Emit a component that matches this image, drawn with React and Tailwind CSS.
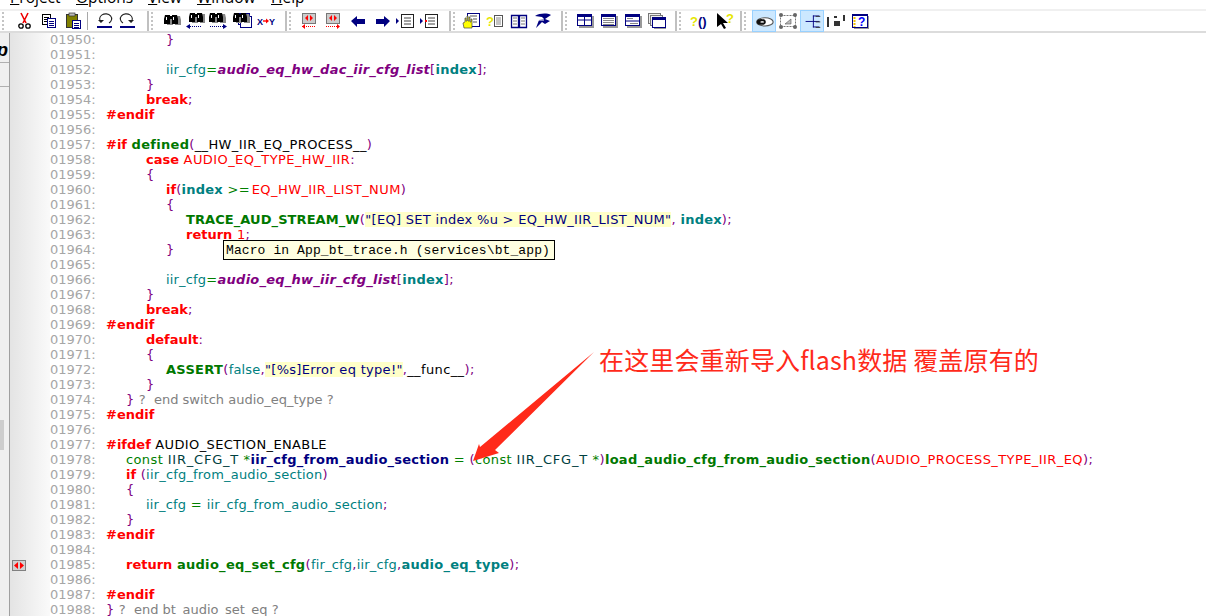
const NAVY = '#000080';

const Svg = ({ children, w = 22, h = 20 }) => (
  <svg width={w} height={h} viewBox={`0 0 ${w} ${h}`} className="block">{children}</svg>
);

const Binoc = ({ x = 5, y = 3 }) => (
  <g>
    <path d={`M${x + 2} ${y + 2}h5v9h-6v-5zM${x + 9} ${y + 2}h5l1 4v5h-6z`} fill="#888" transform="translate(2 1)" />
    <path d={`M${x + 1} ${y + 2}h5v9h-6v-5zM${x + 8} ${y + 2}h5l1 4v5h-6z`} fill="#000" />
    <rect x={x + 6} y={y + 3} width="2" height="3" fill="#000" />
    <rect x={x + 2} y={y + 4} width="1" height="3" fill="#fff" />
    <rect x={x + 9} y={y + 4} width="1" height="3" fill="#fff" />
  </g>
);

const Doc = ({ x, y, w = 8, h = 10, fill = '#fff', line = '#000' }) => (
  <g>
    <rect x={x + 0.5} y={y + 0.5} width={w} height={h} fill={fill} stroke={line} />
    <path d={`M${x + 2} ${y + 3.5}h${w - 3}M${x + 2} ${y + 5.5}h${w - 3}M${x + 2} ${y + 7.5}h${w - 3}`} stroke={line} />
  </g>
);

const Win = ({ x = 3, y = 3, w = 15, h = 12, children }) => (
  <g>
    <rect x={x + 2} y={y + 2} width={w} height={h} fill="#999" />
    <rect x={x + 0.5} y={y + 0.5} width={w - 1} height={h - 1} fill="#fff" stroke={NAVY} />
    <rect x={x} y={y} width={w} height="3" fill={NAVY} />
    {children}
  </g>
);

const Bookmark = ({ dir }) => (
  <Svg>
    <rect x="4.5" y="2.5" width="13" height="10" fill="#ccc" stroke="#777" />
    <path d="M10 4v6l-3-3zM12 4v6l3-3z" fill="#f00" />
    <path d="M4 15.5h13" stroke="#f00" strokeDasharray="1 1" />
    {dir === 'l' ? <path d="M7 13v5l-3-2.5z" fill="#f00" /> : <path d="M15 13v5l3-2.5z" fill="#f00" />}
  </Svg>
);

const icons = {
  cut: (
    <Svg>
      <path d="M7 2l5 10M14 2l-5 10" stroke="#e00" strokeWidth="1.6" fill="none" />
      <circle cx="7" cy="15" r="2.2" fill="none" stroke="#000" strokeWidth="1.3" />
      <circle cx="14" cy="15" r="2.2" fill="none" stroke="#000" strokeWidth="1.3" />
    </Svg>
  ),
  copy: (
    <Svg>
      <Doc x={4} y={3} w={8} h={10} />
      <Doc x={9} y={7} w={8} h={9} fill="#fff" line={NAVY} />
    </Svg>
  ),
  paste: (
    <Svg>
      <rect x="4.5" y="3.5" width="11" height="13" fill="#808000" stroke="#333" />
      <rect x="7" y="2" width="6" height="3" fill="#bbb" stroke="#333" strokeWidth="0.7" />
      <Doc x={10} y={9} w={8} h={8} line={NAVY} />
    </Svg>
  ),
  undo: (
    <Svg>
      <path d="M8 11a6 5 0 1 1 8 1" fill="none" stroke="#222" strokeWidth="1.1" />
      <path d="M5 9h6l-3 3z" fill="#222" />
      <rect x="4" y="15" width="15" height="2" fill={NAVY} />
    </Svg>
  ),
  redo: (
    <Svg>
      <path d="M14 11a6 5 0 1 0-8 1" fill="none" stroke="#222" strokeWidth="1.1" />
      <path d="M17 9h-6l3 3z" fill="#222" />
      <rect x="3" y="15" width="15" height="2" fill={NAVY} />
    </Svg>
  ),
  find: <Svg><Binoc y={2} /></Svg>,
  findBack: (
    <Svg>
      <Binoc x={6} y={0} />
      <path d="M5 15.5h14" stroke={NAVY} strokeDasharray="1 1" />
      <path d="M7 13v5l-4-2.5z" fill={NAVY} />
    </Svg>
  ),
  findNext: (
    <Svg>
      <Binoc x={2} y={0} />
      <path d="M3 15.5h14" stroke={NAVY} strokeDasharray="1 1" />
      <path d="M16 13v5l4-2.5z" fill={NAVY} />
    </Svg>
  ),
  findFiles: (
    <Svg>
      <rect x="7.5" y="2.5" width="11" height="11" fill="#fff" stroke={NAVY} />
      <rect x="9.5" y="5.5" width="11" height="11" fill="#fff" stroke={NAVY} />
      <Binoc x={2} y={0} />
    </Svg>
  ),
  replace: (
    <Svg>
      <text x="2" y="14" fontFamily="Liberation Sans" fontSize="9" fontWeight="700" fill={NAVY}>X</text>
      <path d="M8 10h5" stroke="#f00" strokeWidth="1.4" />
      <path d="M11 7.5l3 2.5-3 2.5z" fill="#f00" />
      <text x="14" y="14" fontFamily="Liberation Sans" fontSize="9" fontWeight="700" fill={NAVY}>Y</text>
    </Svg>
  ),
  bmBack: <Bookmark dir="l" />,
  bmNext: <Bookmark dir="r" />,
  arrowL: <Svg><path d="M5 10l6-5v3h8v5h-8v3z" fill={NAVY} /></Svg>,
  arrowR: <Svg><path d="M20 10l-6-5v3H6v5h8v3z" fill={NAVY} /></Svg>,
  listBack: (
    <Svg>
      <path d="M2 7l3 3-3 3z" fill={NAVY} />
      <rect x="7.5" y="3.5" width="12" height="13" fill="#fff" stroke="#222" />
      <path d="M10 7h7M10 10h7M10 13h7" stroke="#444" />
    </Svg>
  ),
  listNext: (
    <Svg>
      <path d="M2 7l3 3-3 3z" fill={NAVY} />
      <rect x="7.5" y="3.5" width="12" height="13" fill="#fff" stroke="#222" />
      <path d="M10 7h7M10 10h7M10 13h7" stroke="#444" />
      <rect x="7" y="9" width="2" height="2" fill="#f00" />
    </Svg>
  ),
  hand: (
    <Svg>
      <rect x="7.5" y="2.5" width="12" height="13" fill="#fff" stroke={NAVY} />
      <path d="M10 5h7M13 8h4M13 11h4" stroke="#555" />
      <path d="M3 12l2-1V7h1v3h1V5h1v5h1V6h1v5h1V8h1v9H4z" fill="#ff0" stroke="#444" strokeWidth="0.7" />
    </Svg>
  ),
  helpDoc: (
    <Svg>
      <text x="2" y="15" fontFamily="Liberation Sans" fontSize="13" fontWeight="700" fill="#e6e600">?</text>
      <rect x="10.5" y="4.5" width="8" height="11" fill="#fff" stroke="#555" />
      <path d="M12 7h5M12 9h5M12 11h5M12 13h5" stroke="#888" />
    </Svg>
  ),
  book: (
    <Svg>
      <path d="M3.5 4.5h7v12h-7zM11.5 4.5h7v12h-7z" fill="#fff" stroke={NAVY} strokeWidth="1.3" />
      <path d="M5 7h4M5 10h4M5 13h4M13 7h4M13 10h4M13 13h4" stroke="#777" />
    </Svg>
  ),
  swirl: (
    <Svg>
      <path d="M3 5c5-3 12-3 16-1l-6 4 5 2-5 3-3-2-6 6 3-8 5-1-2-2z" fill={NAVY} />
      <path d="M5 9h7" stroke="#fff" />
    </Svg>
  ),
  grid: (
    <Svg>
      <Win><path d="M3 9h15M10.5 6v9" stroke={NAVY} /></Win>
    </Svg>
  ),
  lines: (
    <Svg>
      <Win><path d="M5 7.5h11M5 9.5h11M5 11.5h11M5 13.5h11" stroke="#888" /></Win>
    </Svg>
  ),
  split: (
    <Svg>
      <Win><path d="M3 10h15" stroke={NAVY} /><path d="M5 7.5h6M8 12.5h8" stroke="#888" /></Win>
    </Svg>
  ),
  cascade: (
    <Svg>
      <rect x="2.5" y="2.5" width="12" height="10" fill="#eee" stroke="#777" />
      <rect x="4.5" y="4.5" width="12" height="10" fill="#eee" stroke="#777" />
      <rect x="8" y="8" width="12" height="10" fill="#999" />
      <rect x="6.5" y="6.5" width="13" height="10" fill="#fff" stroke={NAVY} />
      <rect x="6" y="6" width="14" height="3" fill={NAVY} />
    </Svg>
  ),
  paren: (
    <Svg>
      <text x="1" y="15" fontFamily="Liberation Sans" fontSize="13" fontWeight="700" fill="#e6e600">?</text>
      <text x="9" y="15" fontFamily="Liberation Sans" fontSize="13" fontWeight="700" fill={NAVY}>()</text>
    </Svg>
  ),
  pointer: (
    <Svg>
      <path d="M4 2v14l4-3 3 5 2-1-3-5h5z" fill="#000" />
      <text x="13" y="12" fontFamily="Liberation Sans" fontSize="13" fontWeight="700" fill="#e6e600">?</text>
    </Svg>
  ),
  lens: (
    <Svg w={24}>
      <ellipse cx="13" cy="11" rx="9" ry="4.5" fill="#fff" stroke="#555" strokeWidth="1.2" />
      <ellipse cx="9" cy="11" rx="5" ry="3.2" fill="#111" />
      <ellipse cx="10" cy="11" rx="2" ry="1" fill="#ddd" />
    </Svg>
  ),
  frame: (
    <Svg>
      <rect x="3.5" y="4.5" width="15" height="11" fill="none" stroke="#777" strokeDasharray="2 1" />
      <path d="M8 13l6-5v5z" fill="#bbb" stroke="#555" strokeWidth="0.6" />
      <circle cx="4" cy="4" r="2" fill="#666" />
      <circle cx="18" cy="4" r="2" fill="#666" />
      <circle cx="4" cy="16" r="2" fill="#666" />
      <circle cx="18" cy="16" r="2" fill="#666" />
    </Svg>
  ),
  tree: (
    <Svg w={24}>
      <path d="M5 10.5h8M13 4.5h7M13 10.5h7M13 16.5h7M13.5 4v13" stroke={NAVY} fill="none" />
      <path d="M16 5h5M16 11h5M16 17h5" stroke="#333" fill="none" />
    </Svg>
  ),
  layout: (
    <Svg>
      <rect x="2" y="6" width="2" height="10" fill="#333" />
      <rect x="9" y="10" width="6" height="5" fill="#333" />
      <rect x="9" y="5" width="3" height="2" fill="#333" />
      <rect x="18" y="4" width="2" height="6" fill="#333" />
    </Svg>
  ),
  help: (
    <Svg>
      <rect x="5" y="5" width="15" height="13" fill="#999" />
      <rect x="3.5" y="3.5" width="15" height="13" fill="#fff" stroke={NAVY} />
      <rect x="3" y="3" width="16" height="2" fill={NAVY} />
      <path d="M5.5 6v10" stroke="#f0c000" strokeWidth="2" strokeDasharray="2 1" />
      <text x="9" y="15" fontFamily="Liberation Sans" fontSize="12" fontWeight="700" fill="#00f">?</text>
    </Svg>
  ),
};

const Grip = () => (
  <div className="flex h-full w-[3px] flex-col justify-center gap-[2px]">
    {[0, 1, 2, 3, 4].map((i) => (
      <span key={i} className="h-[2px] w-[2px] bg-[#c4c4c4]" />
    ))}
  </div>
);

const Tool = ({ name, active }) => (
  <div
    className={`flex h-[22px] w-6 items-center justify-center ${active ? 'border border-[#99d1ff] bg-[#cce8ff]' : ''}`}
  >
    {icons[name]}
  </div>
);

const groups = [
  { w: 'w-[149px]', pad: 'pl-[8px]', items: ['cut', 'copy', 'paste', '|', 'undo', 'redo'] },
  { w: 'w-[138px]', pad: 'pl-[4px]', items: ['find', 'findBack', 'findNext', 'findFiles', 'replace'] },
  { w: 'w-[164px]', pad: 'pl-[5px]', items: ['bmBack', 'bmNext', 'arrowL', 'arrowR', 'listBack', 'listNext'] },
  { w: 'w-[112px]', pad: 'pl-[3px]', items: ['hand', 'helpDoc', 'book', 'swirl'] },
  { w: 'w-[114px]', pad: 'pl-[5px]', items: ['grid', 'lines', 'split', 'cascade'] },
  { w: 'w-[65px]', pad: 'pl-[6px]', items: ['paren', 'pointer'] },
  { w: 'w-[136px]', pad: 'pl-[5px]', items: ['lens*', 'frame', 'tree*', 'layout', 'help'] },
];

const Toolbar = () => (
  <div className="flex h-[24px] border-t-2 border-b-2 border-t-[#f0f0f0] border-b-[#dcdcdc] bg-white">
    {groups.map((g, i) => (
      <div key={i} className={`flex h-full items-center pl-[2px] ${g.w} ${i < 6 ? 'border-r-2 border-r-[#c0c0c0]' : ''}`}>
        <Grip />
        <div className={`flex items-center ${g.pad}`}>
          {g.items.map((it, j) =>
            it === '|' ? (
              <span key={j} className="ml-[2px] mr-[4px] h-[18px] w-px bg-[#a8a8a8]" />
            ) : (
              <Tool key={j} name={it.replace('*', '')} active={it.endsWith('*')} />
            )
          )}
        </div>
      </div>
    ))}
  </div>
);

const Menu = () => (
  <div className="relative h-[9px] overflow-hidden bg-white font-['Open_Sans',sans-serif] text-[15.5px] leading-none text-black">
    <div className="flex -translate-y-[10px] pl-[10px]">
      <span className="w-[66px]"><u>P</u>roject</span>
      <span className="w-[72px]"><u>O</u>ptions</span>
      <span className="w-[49px]"><u>V</u>iew</span>
      <span className="w-[74px]"><u>W</u>indow</span>
      <span><u>H</u>elp</span>
    </div>
  </div>
);

const styles = {
  kw: 'font-bold tracking-normal text-[#ff0000]',
  red: 'tracking-[0.42px] text-[#ff0000]',
  v: 'tracking-[0.18px] text-[#008080]',
  vb: 'font-bold tracking-[0.24px] text-[#008080]',
  op: 'text-[#008000]',
  br: 'text-[#800080]',
  fn: 'font-bold tracking-[0.3px] text-[#007800]',
  fu: 'font-bold tracking-[0.08px] text-[#007800]',
  gl: 'font-bold italic tracking-[0.24px] text-[#800080]',
  str: 'bg-[#ffffc8] tracking-[0.3px] text-[#000080]',
  tx: 'text-black',
  gr: 'tracking-normal text-[#808080]',
  lv: 'font-bold tracking-[0.24px] text-[#000080]',
  ty: 'tracking-[0.8px] text-[#004040]',
};

// [indent level, tokens...]
const code = [
  [3, ['}', 'br']],
  [],
  [3, ['iir_cfg', 'v'], ['=', 'op'], ['audio_eq_hw_dac_iir_cfg_list', 'gl'], ['[', 'br'], ['index', 'vb'], [']', 'br'], [';', 'br']],
  [2, ['}', 'br']],
  [2, ['break', 'kw'], [';', 'br']],
  [0, ['#endif', 'kw']],
  [],
  [0, ['#if ', 'kw'], ['defined', 'fn'], ['(', 'br'], ['__HW_IIR_EQ_PROCESS__', 'tx'], [')', 'br']],
  [2, ['case ', 'kw'], ['AUDIO_EQ_TYPE_HW_IIR', 'red'], [':', 'br']],
  [2, ['{', 'br']],
  [3, ['if', 'kw'], ['(', 'br'], ['index', 'vb'], [' >=\u200A', 'op'], ['EQ_HW_IIR_LIST_NUM', 'red'], [')', 'br']],
  [3, ['{', 'br']],
  [4, ['TRACE_AUD_STREAM_W', 'fu'], ['(', 'br'], ['"[EQ] SET index %u > EQ_HW_IIR_LIST_NUM"', 'str'], [', ', 'br'], ['index', 'vb'], [');', 'br']],
  [4, ['return ', 'kw'], ['1', 'red'], [';', 'br']],
  [3, ['}', 'br']],
  [],
  [3, ['iir_cfg', 'v'], ['=', 'op'], ['audio_eq_hw_iir_cfg_list', 'gl'], ['[', 'br'], ['index', 'vb'], [']', 'br'], [';', 'br']],
  [2, ['}', 'br']],
  [2, ['break', 'kw'], [';', 'br']],
  [0, ['#endif', 'kw']],
  [2, ['default', 'kw'], [':', 'br']],
  [2, ['{', 'br']],
  [3, ['ASSERT', 'fn'], ['(', 'br'], ['false', 'v'], [',', 'br'], ['"[%s]Error eq type!"', 'str'], [',', 'br'], ['__func__', 'tx'], [')', 'br'], [';', 'br']],
  [2, ['}', 'br']],
  [1, ['}', 'br'], [' ?  end switch audio_eq_type ?', 'gr']],
  [0, ['#endif', 'kw']],
  [],
  [0, ['#ifdef ', 'kw'], ['AUDIO_SECTION_ENABLE', 'tx']],
  [1, ['const ', 'op'], ['IIR_CFG_T', 'ty'], [' *', 'op'], ['iir_cfg_from_audio_section', 'lv'], [' = ', 'op'], ['(', 'br'], ['const ', 'op'], ['IIR_CFG_T', 'ty'], [' *', 'op'], [')', 'br'], ['load_audio_cfg_from_audio_section', 'fn'], ['(', 'br'], ['AUDIO_PROCESS_TYPE_IIR_EQ', 'red'], [')', 'br'], [';', 'br']],
  [1, ['if ', 'kw'], ['(', 'br'], ['iir_cfg_from_audio_section', 'v'], [')', 'br']],
  [1, ['{', 'br']],
  [2, ['iir_cfg', 'v'], [' = ', 'op'], ['iir_cfg_from_audio_section', 'v'], [';', 'br']],
  [1, ['}', 'br']],
  [0, ['#endif', 'kw']],
  [],
  [1, ['return ', 'kw'], ['audio_eq_set_cfg', 'fn'], ['(', 'br'], ['fir_cfg', 'v'], [',', 'br'], ['iir_cfg', 'v'], [',', 'br'], ['audio_eq_type', 'vb'], [')', 'br'], [';', 'br']],
  [],
  [0, ['#endif', 'kw']],
  [0, ['}', 'br'], [' ?  end bt_audio_set_eq ?', 'gr']],
];

const indents = ['pl-0', 'pl-[20px]', 'pl-[40px]', 'pl-[60px]', 'pl-[80px]'];

const CodeLine = ({ num, line }) => {
  const [level, ...tokens] = line;
  return (
    <div className="flex h-[15px] items-center whitespace-pre">
      <span className="w-[56px] shrink-0 font-['DejaVu_Sans',sans-serif] text-[13px] leading-[15px] text-[#a6a6a6]">
        {String(num).padStart(5, '0')}:
      </span>
      <span className={`font-['DejaVu_Sans',sans-serif] text-[13px] leading-[15px] tracking-[0.38px] ${indents[level ?? 0]}`}>
        {tokens.map(([t, s], i) => (
          <span key={i} className={styles[s]}>{t}</span>
        ))}
      </span>
    </div>
  );
};

const Arrow = () => (
  <svg width="130" height="115" viewBox="470 350 130 115" className="absolute left-[470px] top-[350px]">
    <path d="M594 352L480 447 479 444 473 461 499 453 495 450z" fill="#ff2a1a" />
  </svg>
);

export default function App() {
  return (
    <div className="relative h-[616px] w-[1206px] overflow-hidden bg-white">
      <Menu />
      <Toolbar />
      <div className="flex">
        <div className="relative h-[583px] w-[10px] shrink-0 overflow-hidden border-r border-r-[#a0a0a0] bg-[#f0f0f0]">
          <span className="absolute -left-[3px] top-[8px] font-['Liberation_Sans',sans-serif] text-[18px] font-bold italic leading-none text-black">p</span>
          <span className="absolute left-0 top-[29px] h-px w-full bg-[#b0b0b0]" />
          <span className="absolute left-0 top-[53px] h-px w-full bg-[#b0b0b0]" />
          <span className="absolute left-0 top-[387px] h-[30px] w-[4px] bg-[#cdcdcd]" />
        </div>
        <div className="relative flex h-[583px] w-[40px] shrink-0 bg-gradient-to-r from-[#e4e4e4] to-[#fafafa]">
          <span className="absolute left-[2px] top-[527px] flex h-[11px] w-[14px] items-center justify-center border border-[#808080] bg-[#d0d0d0]">
            <svg width="10" height="7" viewBox="0 0 10 7"><path d="M4 0v7L0 3.5zM6 0v7l4-3.5z" fill="#f00" /></svg>
          </span>
        </div>
        <div className="-mt-px min-w-0 flex-1 overflow-hidden">
          {code.map((line, i) => (
            <CodeLine key={i} num={1950 + i} line={line} />
          ))}
        </div>
      </div>

      <div className="absolute left-[223px] top-[240px] flex h-[20px] w-[332px] items-center border border-black bg-[#ffffe1] pl-[2px] pt-[2px] font-['Liberation_Mono',monospace] text-[13px] tracking-[0.1px] whitespace-pre text-black">
        Macro in App_bt_trace.h (services\bt_app)
      </div>

      <Arrow />
      <div className="absolute left-[599px] top-[341px] font-['Noto_Sans_CJK_SC','Noto_Sans',sans-serif] text-[25px] tracking-[0.15px] leading-[36px] whitespace-pre text-[#ff2a1a]">
        在这里会重新导入flash数据 覆盖原有的
      </div>
    </div>
  );
}
